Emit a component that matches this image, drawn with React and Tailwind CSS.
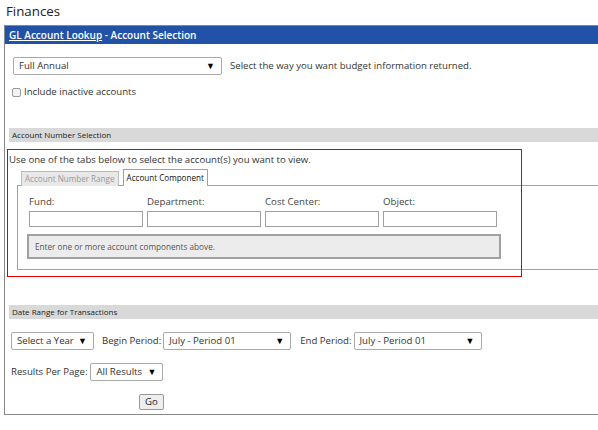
import React from "react";

function Select({ value, className }) {
  return (
    <div
      className={`flex items-center justify-between h-[18px] border border-[#a9a9a9] rounded-[2px] bg-white pl-[5px] pr-[6px] text-[9.6px] whitespace-nowrap text-[#333] ${className}`}
    >
      <span>{value}</span>
      <span className="text-[9px] text-black">▼</span>
    </div>
  );
}

function SectionBar({ title }) {
  return (
    <div className="h-[14px] bg-[#d9d9d9] pl-[3px] text-[8px] leading-[14px] text-[#222]">
      {title}
    </div>
  );
}

export default function App() {
  const fields = ["Fund:", "Department:", "Cost Center:", "Object:"];

  return (
    <div
      className="w-[598px] h-[430px] overflow-hidden bg-white text-[#333]"
      style={{ fontFamily: '"Open Sans", "Liberation Sans", sans-serif' }}
    >
      <div className="h-[25px] pl-[6px] pt-[2px] text-[13.3px] leading-[18px] text-[#222]">
        Finances
      </div>
      <div className="relative ml-[4px] w-[640px] border-l border-t border-b border-[#888]">
        <div className="h-[18px] bg-[#2152a7] pl-[4px] text-[10px] font-semibold leading-[18px] text-white">
          <span className="underline">GL Account Lookup</span> - Account Selection
        </div>

        <div className="pl-[4px]">
          <div className="flex items-center mt-[13px] ml-[4px]">
            <Select value="Full Annual" className="w-[209px]" />
            <span className="ml-[8px] text-[9.6px]">
              Select the way you want budget information returned.
            </span>
          </div>
          <div className="flex items-center mt-[10px] ml-[3px] text-[9.6px] leading-[14px]">
            <span className="w-[9px] h-[9px] border border-[#999] rounded-[2px] bg-[#f2f2f2]"></span>
            <span className="ml-[3px]">Include inactive accounts</span>
          </div>

          <div className="mt-[29px]">
            <SectionBar title="Account Number Selection" />
          </div>

          <div className="mt-[11px] text-[9.6px] leading-[13px]">
            Use one of the tabs below to select the account(s) you want to view.
          </div>

          <div className="mt-[2px] ml-[8px]">
            <div className="flex items-end h-[17px] pl-[4px]">
              <div className="h-[15px] px-[3px] mb-[-1px] bg-[#e8e8e8] border border-[#bbb] border-b-0 text-[8.1px] leading-[14px] text-[#999]">
                Account Number Range
              </div>
              <div className="relative z-10 h-[17px] ml-[4px] px-[3px] mb-[-1px] bg-white border border-[#a0a0a0] border-b-0 text-[8.1px] leading-[16px] text-[#111]">
                Account Component
              </div>
            </div>
            <div className="h-[85px] border border-[#a0a0a0] pl-[11px] pt-[9px]">
              <div className="flex gap-[4px]">
                {fields.map((f) => (
                  <div key={f} className="w-[114px]">
                    <div className="text-[9.7px] leading-[13px] text-[#444]">{f}</div>
                    <div className="mt-[3px] h-[16px] border border-[#a0a0a0] bg-white"></div>
                  </div>
                ))}
              </div>
              <div className="mt-[7px] ml-[-2px] w-[474px] h-[25px] border-2 border-[#a0a0a0] bg-[#ececec] pl-[6px] text-[8.2px] leading-[21px] text-[#555]">
                Enter one or more account components above.
              </div>
            </div>
          </div>

          <div className="mt-[35px]">
            <SectionBar title="Date Range for Transactions" />
          </div>

          <div className="flex items-center mt-[13px] ml-[2px] text-[9.6px]">
            <Select value="Select a Year" className="w-[83px]" />
            <span className="ml-[8px] mr-[2px]">Begin Period:</span>
            <Select value="July - Period 01" className="w-[128px]" />
            <span className="ml-[9px] mr-[2px]">End Period:</span>
            <Select value="July - Period 01" className="w-[128px]" />
          </div>

          <div className="flex items-center mt-[13px] ml-[2px] text-[9.6px]">
            <span className="mr-[3px]">Results Per Page:</span>
            <Select value="All Results" className="w-[73px]" />
          </div>

          <div className="flex mt-[13px] ml-[130px] pb-[4px]">
            <div className="h-[16px] px-[5px] border border-[#999] rounded-[2px] bg-[#eee] text-[9.6px] leading-[14px] text-[#222]">
              Go
            </div>
          </div>
        </div>

        <div className="absolute left-[2px] top-[123px] w-[515px] h-[128px] border border-[#e00000] pointer-events-none"></div>
      </div>
    </div>
  );
}
